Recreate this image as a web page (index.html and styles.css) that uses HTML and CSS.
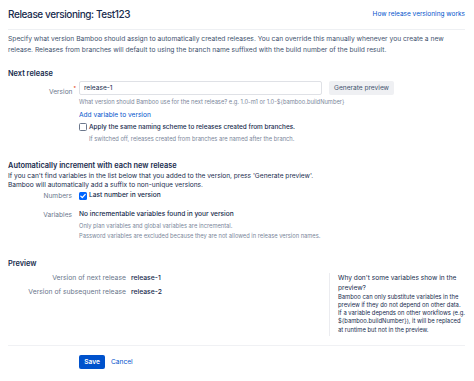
FILE: index.html
```html
<!DOCTYPE html>
<html>
<head>
<meta charset="utf-8">
<link rel="stylesheet" href="styles.css">
</head>
<body>
<div class="page">
  <header class="header">
    <h1 class="title">Release versioning: Test123</h1>
    <a class="link small-link" href="#">How release versioning works</a>
  </header>
  <p class="desc">Specify what version Bamboo should assign to automatically created releases. You can override this manually whenever you create a new release. Releases from branches will default to using the branch name suffixed with the build number of the build result.</p>

  <h2 class="section-title first">Next release</h2>
  <div class="row row-version">
    <label class="label">Version<span class="req">*</span></label>
    <div class="field">
      <div class="input-line">
        <div class="input">release-1</div>
        <button class="btn">Generate preview</button>
      </div>
      <div class="help h1">What version should Bamboo use for the next release? e.g. 1.0-m1 or 1.0-${bamboo.buildNumber}</div>
      <a class="link add-var" href="#">Add variable to version</a>
      <div class="check-line">
        <span class="cb"></span>
        <span class="cb-text apply">Apply the same naming scheme to releases created from branches.</span>
      </div>
      <div class="help indent">If switched off, releases created from branches are named after the branch.</div>
    </div>
  </div>

  <h2 class="section-title second">Automatically increment with each new release</h2>
  <p class="info">If you can't find variables in the list below that you added to the version, press 'Generate preview'.<br>Bamboo will automatically add a suffix to non-unique versions.</p>
  <div class="row row-numbers">
    <span class="label">Numbers</span>
    <div class="field">
      <div class="check-line plain">
        <span class="cb checked"><svg viewBox="0 0 8 8" width="8" height="8"><path d="M1.8 4.1 L3.3 5.6 L6.2 2.4" fill="none" stroke="#fff" stroke-width="1.3" stroke-linecap="round" stroke-linejoin="round"/></svg></span>
        <span class="cb-text">Last number in version</span>
      </div>
    </div>
  </div>
  <div class="row row-vars">
    <span class="label">Variables</span>
    <div class="field">
      <div class="vars-text">No incrementable variables found in your version</div>
      <div class="help lines">Only plan variables and global variables are incremental.<br>Password variables are excluded because they are not allowed in release version names.</div>
    </div>
  </div>

  <h2 class="section-title third">Preview</h2>
  <div class="preview">
    <div class="preview-rows">
      <div class="prow"><span class="plabel">Version of next release</span><span class="pval">release-1</span></div>
      <div class="prow"><span class="plabel">Version of subsequent release</span><span class="pval">release-2</span></div>
    </div>
    <aside class="side">
      <div class="side-title">Why don't some variables show in the preview?</div>
      <div class="side-body">Bamboo can only substitute variables in the preview if they do not depend on other data. If a variable depends on other workflows (e.g. ${bamboo.buildNumber}), it will be replaced at runtime but not in the preview.</div>
    </aside>
  </div>

  <footer class="footer">
    <button class="save">Save</button>
    <a class="link cancel" href="#">Cancel</a>
  </footer>
</div>
</body>
</html>
```
FILE: styles.css
```css
* { box-sizing: border-box; }
html, body { margin: 0; padding: 0; background: #fff; }
body {
  font-family: Inter, "Noto Sans", sans-serif;
  color: #172b4d;
  font-size: 6.6px;
}
.page { padding: 0 9px 0 8px; width: 474px; }
.header {
  display: flex;
  justify-content: space-between;
  align-items: center;
  height: 30px;
  border-bottom: 1px solid #eef0f3;
  padding-bottom: 1px;
}
.title { margin: 0; font-size: 10px; font-weight: 500; color: #172b4d; letter-spacing: -0.4px; }
.link { color: #0052cc; text-decoration: none; }
.small-link { font-size: 6.5px; }
.desc { margin: 4px 0 0; font-size: 6.7px; line-height: 11px; color: #42526e; }
.section-title { margin: 0; font-size: 7.4px; line-height: 11px; font-weight: 600; color: #172b4d; }
.section-title.first { margin-top: 11.5px; }
.section-title.second { margin-top: 16.5px; }
.section-title.third { margin-top: 17px; }
.row { display: grid; grid-template-columns: 64px 1fr; column-gap: 7px; }
.label { color: #6b778c; text-align: right; font-size: 6.6px; }
.row-version { margin-top: 2.5px; }
.row-version .label { line-height: 14px; }
.req { color: #de350b; font-size: 5px; vertical-align: 4px; margin-left: 1px; margin-right: -4px; }
.input-line { display: flex; gap: 7px; }
.input {
  width: 243px; height: 14px;
  border: 1px solid #dfe1e6; border-radius: 2px;
  padding: 0 4px; line-height: 12px; font-size: 6.6px; color: #172b4d;
}
.btn {
  width: 65px; height: 14px; border: 0; border-radius: 2px;
  background: #eff0f3; color: #42526e; font: inherit; font-size: 6.6px; padding: 0;
}
.help { color: #7a869a; font-size: 5.75px; line-height: 8px; }
.help.h1 { margin-top: 3px; }
.add-var { display: block; font-size: 6.6px; line-height: 9px; margin-top: 4.5px; }
.check-line { display: flex; align-items: center; gap: 2px; margin-top: 2.5px; height: 10px; }
.cb {
  width: 8px; height: 8px; border: 1px solid #6b778c; border-radius: 1.5px;
  display: inline-flex; background: #fff; flex: none;
}
.cb.checked { border: 0; background: #0065ff; }
.cb-text { font-size: 6.6px; color: #172b4d; font-weight: 500; }
.cb-text.apply { font-size: 6.4px; }
.help.indent { margin-top: 3px; padding-left: 10px; }
.info { margin: 1px 0 0; font-size: 6.6px; line-height: 9px; color: #172b4d; }
.row-numbers { margin-top: 0.5px; line-height: 11px; }
.row-numbers .label { line-height: 13px; }
.check-line.plain { margin-top: 0; height: 11px; }
.row-vars { margin-top: 6px; }
.row-vars .label { line-height: 13px; }
.vars-text { font-size: 6.6px; line-height: 11px; color: #172b4d; font-weight: 500; }
.help.lines { line-height: 10px; margin-top: 0.5px; }
.preview { display: flex; margin-top: 2px; }
.preview-rows { flex: 1; }
.prow { display: grid; grid-template-columns: 118px 1fr; column-gap: 5px; line-height: 14px; }
.plabel { text-align: right; color: #6b778c; font-size: 6.8px; }
.pval { color: #172b4d; font-size: 6.8px; font-weight: 500; }
.side {
  width: 136px; margin-top: 2px;
  border-left: 1px solid #ebecf0; padding: 0 0 2px 8px;
}
.side-title { font-size: 6.6px; line-height: 10px; color: #172b4d; }
.side-body { font-size: 5.85px; line-height: 8.3px; color: #172b4d; }
.footer {
  margin-top: 9px; border-top: 1px solid #f0f1f4;
  padding: 9px 0 0 71px; display: flex; align-items: center; gap: 6px;
}
.save {
  width: 26px; height: 14px; border: 0; border-radius: 2px;
  background: #0052cc; color: #fff; font: inherit; font-size: 6.6px; font-weight: 600; padding: 0;
}
.cancel { font-size: 6.6px; }
```
